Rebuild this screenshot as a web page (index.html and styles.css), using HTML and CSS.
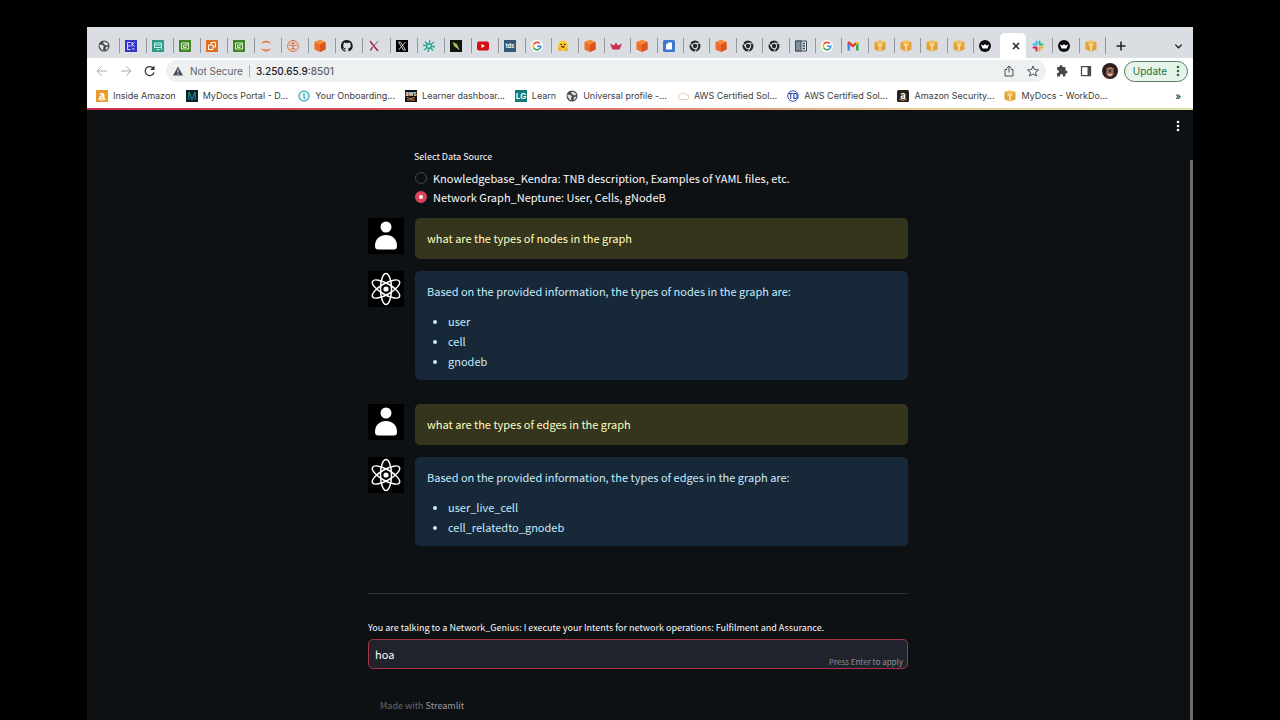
FILE: index.html
```
<!DOCTYPE html>
<html lang="en">
<head>
    <meta charset="UTF-8">
    <meta name="viewport" content="width=device-width, initial-scale=1.0">
    <title>Network Genius</title>
    <link rel="stylesheet" href="styles.css">
</head>
<body>
    <!-- icons used more than once -->
    <svg class="sprite" aria-hidden="true">
        <symbol id="globe" viewBox="0 0 24 24"><circle cx="12" cy="12" r="11" fill="#474b50"/><path d="M3 9l6 1 3 3-2 3 1 5-4-2-4-6zM12 3l7 3 1 4-4 1-3-2-3-3zM16 14l5-1-3 6-3 1z" fill="#dee1e6"/></symbol>
        <symbol id="cube" viewBox="0 0 24 24"><path d="M12 0l11 4v15l-11 5-11-5V4z" fill="#ee6c2b"/><path d="M12 0l11 4-11 5L1 4z" fill="#f58a3c"/><path d="M12 9l11-5v15l-11 5z" fill="#d9531d"/></symbol>
        <symbol id="goldbox" viewBox="0 0 24 24"><path d="M12 1l11 3v15l-11 4-11-4V4z" fill="#e3a238"/><path d="M12 1l11 3-11 4L1 4z" fill="#f2c05a"/><path d="M7 7l5 1 5-1v4l-3 1v9l-2 1-2-1v-9l-3-1z" fill="#f8da97"/></symbol>
        <symbol id="green" viewBox="0 0 24 24"><path d="M0 0h24v24H0z" fill="#3f8624"/><path d="M5 6h14v12H5z" fill="none" stroke="#d9efce" stroke-width="2"/><path d="M9 10h5v5H9zM14 10l4-3" fill="none" stroke="#d9efce" stroke-width="2"/></symbol>
        <symbol id="google" viewBox="0 0 24 24"><circle cx="12" cy="12" r="12" fill="#fff"/><g fill="none" stroke-width="3.400"><path d="M17.300 6.700A7.500 7.500 0 0 0 5.500 8.300" stroke="#ea4335"/><path d="M5.500 8.300a7.500 7.500 0 0 0 0 7.400" stroke="#fbbc05"/><path d="M5.500 15.700a7.500 7.500 0 0 0 11.500 2" stroke="#34a853"/><path d="M17 17.700a7.500 7.500 0 0 0 2.500-5.200H12" stroke="#4285f4"/></g></symbol>
        <symbol id="chrome" viewBox="0 0 24 24"><circle cx="12" cy="12" r="11" fill="#24272b"/><circle cx="12" cy="12" r="5.500" fill="none" stroke="#dee1e6" stroke-width="2"/><path d="M12 6.500h10M7.300 14.700L2.500 6M16.700 14.700L12 23" stroke="#dee1e6" stroke-width="2"/></symbol>
        <symbol id="crown" viewBox="0 0 24 24"><circle cx="12" cy="12" r="12" fill="#0b0c0e"/><path d="M4 9l5 2 3-3 3 3 5-2-3 8H7z" fill="#fff"/></symbol>
        <symbol id="dots" viewBox="0 0 24 24"><circle cx="12" cy="4" r="2.600"/><circle cx="12" cy="12" r="2.600"/><circle cx="12" cy="20" r="2.600"/></symbol>
        <symbol id="person" viewBox="0 0 36 36"><path d="M0 0h36v36H0z"/><circle cx="18" cy="9" r="5.500" fill="#fff"/><path d="M7 28c0-7 4.500-11 11-11s11 4 11 11c0 2.500-1 3.500-3 3.500H10c-2 0-3-1-3-3.500z" fill="#fff"/></symbol>
        <symbol id="atom" viewBox="0 0 36 36"><path d="M0 0h36v36H0z"/><g fill="none" stroke="#fff" stroke-width="1.500"><ellipse cx="18" cy="18" rx="5.500" ry="15.500"/><ellipse cx="18" cy="18" rx="5.500" ry="15.500" transform="rotate(60 18 18)"/><ellipse cx="18" cy="18" rx="5.500" ry="15.500" transform="rotate(120 18 18)"/></g><circle cx="18" cy="18" r="2.600" fill="#fff"/></symbol>
    </svg>

    <div class="browser">
        <header class="chrome">
            <div class="tab-strip">
                <div class="tabs">
                    <button class="tab wide first" aria-label="Site"><svg><use href="#globe"/></svg></button>
                    <button class="tab wide" aria-label="EKS"><svg viewBox="0 0 24 24"><path d="M0 0h24v24H0z" fill="#3436c7"/><path d="M5 5v14M5 5h6M5 12h6M5 19h6M14 4v9M14 9l5-4M14 8l5 5M14 18h5" stroke="#d5d8ff" stroke-width="2"/></svg></button>
                    <button class="tab wide" aria-label="Service"><svg viewBox="0 0 24 24"><path d="M0 0h24v24H0z" fill="#2b9a87"/><path d="M5 6h14v9H5zM5 10h14M9 19h6M17 14l3 5" fill="none" stroke="#c9f2ea" stroke-width="2"/></svg></button>
                    <button class="tab wide" aria-label="Storage"><svg><use href="#green"/></svg></button>
                    <button class="tab wide" aria-label="EC2"><svg viewBox="0 0 24 24"><path d="M0 0h24v24H0z" fill="#e2711d"/><path d="M5 10h9v9H5zM10 10V5h9v9h-5" fill="none" stroke="#fff" stroke-width="2"/></svg></button>
                    <button class="tab wide" aria-label="Storage"><svg><use href="#green"/></svg></button>
                    <button class="tab wide" aria-label="Jupyter"><svg viewBox="0 0 24 24"><path d="M2 8c3-9 17-9 20 0-5-4-15-4-20 0zM2 16c3 9 17 9 20 0-5 4-15 4-20 0z" fill="#e8743b"/></svg></button>
                    <button class="tab wide" aria-label="Model"><svg viewBox="0 0 24 24" fill="none" stroke="#df7546" stroke-width="2"><path d="M9 1h6l6 4 2 7-2 7-6 4H9l-6-4-2-7 2-7z"/><path d="M12 1v22M12 8L7 5M12 12L4 10M12 16l-6 3M12 8l5-3M12 12l8-2M12 16l6 3"/></svg></button>
                    <button class="tab wide" aria-label="AWS"><svg><use href="#cube"/></svg></button>
                    <button class="tab wide" aria-label="GitHub"><svg viewBox="0 0 16 16"><path d="M8 0a8 8 0 0 0-2.500 15.600c.4.100.5-.2.500-.4v-1.500c-2.200.5-2.700-1-2.700-1-.4-.9-.9-1.200-.9-1.200-.7-.5.100-.5.100-.5.800.100 1.200.8 1.200.8.700 1.200 1.900.9 2.300.7.100-.5.300-.9.500-1.100-1.800-.2-3.600-.9-3.600-4 0-.9.300-1.600.8-2.100-.1-.2-.4-1 .1-2.100 0 0 .7-.2 2.200.8a7.600 7.600 0 0 1 4 0c1.500-1 2.200-.8 2.200-.8.400 1.100.2 1.900.1 2.100.5.600.8 1.300.8 2.100 0 3.100-1.900 3.700-3.700 3.900.3.300.6.800.6 1.500v2.200c0 .2.100.5.600.4A8 8 0 0 0 8 0z" fill="#15181c"/></svg></button>
                    <button class="tab wide" aria-label="arXiv"><svg viewBox="0 0 24 24"><path d="M4 2l6 8 10 12M9 14l-4 7" stroke="#a8253f" stroke-width="3"/><path d="M20 2l-9 11" stroke="#6e6467" stroke-width="2"/></svg></button>
                    <button class="tab wide" aria-label="X"><svg viewBox="0 0 24 24"><path d="M0 0h24v24H0z"/><path d="M5 4h4l10 16h-4zM19 4L5 20" fill="none" stroke="#fff" stroke-width="1.500"/></svg></button>
                    <button class="tab wide" aria-label="Sun"><svg viewBox="0 0 24 24" fill="none" stroke="#2aa894" stroke-width="2.600"><circle cx="12" cy="12" r="4.500"/><path d="M12 8l2-8M16 9l6-5M16 12l8 2M15 15l5 6M12 16l-2 8M8 15l-6 5M8 12l-8-2M9 9L4 3"/></svg></button>
                    <button class="tab wide" aria-label="Bird"><svg viewBox="0 0 24 24"><path d="M0 0h24v24H0z" fill="#101510"/><path d="M5 4l9 4 5 12-10-7z" fill="#a3ae4b"/><path d="M6 5l12 14" stroke="#eef0bb"/></svg></button>
                    <button class="tab wide" aria-label="YouTube"><svg viewBox="0 0 24 24"><rect y="3" width="24" height="18" rx="4" fill="#d50f16"/><path d="M9 8l7 4-7 4z" fill="#fff"/></svg></button>
                    <button class="tab wide" aria-label="TDS"><svg viewBox="0 0 24 24"><path d="M0 0h24v24H0z" fill="#355876"/><text x="12" y="16" font-size="11" font-weight="700" text-anchor="middle" fill="#fff">tds</text></svg></button>
                    <button class="tab" aria-label="Google"><svg><use href="#google"/></svg></button>
                    <button class="tab" aria-label="Hugging Face"><svg viewBox="0 0 24 24"><circle cx="12" cy="11" r="10" fill="#fbc934"/><path d="M1 15l6 1 4 6H3zM23 15l-6 1-4 6h8z" fill="#f0b42e"/><circle cx="8.500" cy="9" r="1.500"/><circle cx="15.500" cy="9" r="1.500"/><path d="M8 12h8c-1 5-7 5-8 0z" fill="#7b3d16"/></svg></button>
                    <button class="tab" aria-label="AWS"><svg><use href="#cube"/></svg></button>
                    <button class="tab" aria-label="Streamlit"><svg viewBox="0 0 24 24"><path d="M0 7l8 4 4-6 4 6 8-4-4 10c-1 2-2 2-3 2H7c-1 0-2 0-3-2z" fill="#cb2d4c"/></svg></button>
                    <button class="tab" aria-label="AWS"><svg><use href="#cube"/></svg></button>
                    <button class="tab" aria-label="Document"><svg viewBox="0 0 24 24"><rect width="24" height="24" rx="3" fill="#3c78d0"/><path d="M10 5h8v14H6V9z" fill="#fff"/><path d="M6 9h4V5z" fill="#8db6ee"/></svg></button>
                    <button class="tab" aria-label="Chrome"><svg><use href="#chrome"/></svg></button>
                    <button class="tab" aria-label="AWS"><svg><use href="#cube"/></svg></button>
                    <button class="tab" aria-label="Chrome"><svg><use href="#chrome"/></svg></button>
                    <button class="tab" aria-label="Chrome"><svg><use href="#chrome"/></svg></button>
                    <button class="tab" aria-label="Reader"><svg viewBox="0 0 24 24"><path d="M1 2h22v20H1z" fill="#e9edef" stroke="#394b59" stroke-width="2"/><path d="M1 2h11v20H1z" fill="#81919b" stroke="#394b59" stroke-width="2"/><path d="M15 7h5M15 12h5M15 17h5" stroke="#394b59" stroke-width="3"/></svg></button>
                    <button class="tab" aria-label="Google"><svg><use href="#google"/></svg></button>
                    <button class="tab" aria-label="Gmail"><svg viewBox="0 0 24 24"><path d="M1 6l5 4v11H1z" fill="#4285f4"/><path d="M18 10l5-4v15h-5z" fill="#34a853"/><path d="M1 6c0-3 3-4 5-2l6 5 6-5v6l-6 5-11-8z" fill="#e33b2e"/><path d="M18 4c2-2 5-1 5 2l-5 4z" fill="#fbbc05"/></svg></button>
                    <button class="tab" aria-label="MyDocs"><svg><use href="#goldbox"/></svg></button>
                    <button class="tab" aria-label="MyDocs"><svg><use href="#goldbox"/></svg></button>
                    <button class="tab" aria-label="MyDocs"><svg><use href="#goldbox"/></svg></button>
                    <button class="tab" aria-label="MyDocs"><svg><use href="#goldbox"/></svg></button>
                    <button class="tab" aria-label="Streamlit"><svg><use href="#crown"/></svg></button>
                    <button class="tab active" aria-label="Close tab"><svg viewBox="0 0 24 24"><path d="M6 6l12 12M18 6L6 18" stroke="#202124" stroke-width="3"/></svg></button>
                    <button class="tab first" aria-label="Slack"><svg viewBox="0 0 24 24" fill="none" stroke-width="4" stroke-linecap="round"><path d="M9 3v6M3 9h4" stroke="#36bdea"/><path d="M15 9h6M15 3v3" stroke="#2eb67d"/><path d="M15 15v6M18 15h3" stroke="#ecb22e"/><path d="M3 15h6M9 18v3" stroke="#d51e59"/></svg></button>
                    <button class="tab" aria-label="Streamlit"><svg><use href="#crown"/></svg></button>
                    <button class="tab" aria-label="MyDocs"><svg><use href="#goldbox"/></svg></button>
                </div>
                <button class="new-tab" aria-label="New tab"><svg viewBox="0 0 24 24"><path d="M12 3v18M3 12h18" stroke="#202124" stroke-width="3"/></svg></button>
                <button class="tab-menu" aria-label="Search tabs"><svg viewBox="0 0 24 24" fill="none"><path d="M5 9l7 7 7-7" stroke="#202124" stroke-width="3"/></svg></button>
            </div>

            <div class="toolbar">
                <div class="nav">
                    <button aria-label="Back"><svg viewBox="0 0 24 24" fill="none" stroke="#a5a8ac" stroke-width="2"><path d="M22 12H3M11 3l-9 9 9 9"/></svg></button>
                    <button aria-label="Forward"><svg viewBox="0 0 24 24" fill="none" stroke="#a5a8ac" stroke-width="2"><path d="M2 12h19M13 3l9 9-9 9"/></svg></button>
                    <button aria-label="Reload"><svg viewBox="0 0 24 24" fill="none" stroke="#303236" stroke-width="2.500"><path d="M20 15a9 9 0 1 1-2-9"/><path d="M21 1v9h-9z" fill="#303236" stroke="none"/></svg></button>
                </div>
                <div class="address">
                    <svg viewBox="0 0 24 24"><path d="M12 3l10 18H2z" fill="#4b4e52"/><path d="M12 9v6M12 17v3" stroke="#eef1f2" stroke-width="2"/></svg>
                    <span class="warning">Not Secure</span>
                    <span class="url">3.250.65.9<span class="port">:8501</span></span>
                    <button aria-label="Share"><svg viewBox="0 0 24 24" fill="none" stroke="#4b4e52" stroke-width="2"><path d="M8 9H4v13h16V9h-4M12 15V2M7 7l5-5 5 5"/></svg></button>
                    <button aria-label="Bookmark this tab"><svg viewBox="0 0 24 24" fill="none" stroke="#4b4e52" stroke-width="2"><path d="M12 2l3 7 8 1-6 5 2 7-7-4-7 4 2-7-6-5 8-1z"/></svg></button>
                </div>
                <div class="tools">
                    <button aria-label="Extensions"><svg viewBox="0 0 24 24" fill="#45484c"><path d="M20 11h-1V6c0-1-1-2-2-2h-4V3a3 3 0 0 0-6 0v1H4C3 4 2 5 2 6v4h1a3 3 0 0 1 0 6H2v5c0 1 1 2 2 2h4v-2a3 3 0 0 1 6 0v2h3c1 0 2-1 2-2v-4h1a3 3 0 0 0 0-6z"/></svg></button>
                    <button aria-label="Side panel"><svg viewBox="0 0 24 24"><path d="M3 3h18v18H3z" fill="none" stroke="#45484c" stroke-width="2.500"/><path d="M15 3h6v18h-6z" fill="#45484c"/></svg></button>
                    <button class="profile" aria-label="Profile"><svg viewBox="0 0 32 32"><circle cx="16" cy="16" r="16" fill="#2c211e"/><path d="M8 12c2-5 14-5 16 0v7c-1 11-15 11-16 0z" fill="#b97560"/><path d="M8 14h7v4H8zM17 14h7v4h-7z" fill="#dba897" stroke="#181314" stroke-width="1.500"/><path d="M12 23q4 3 8 0" stroke="#f3dfd7" stroke-width="2" fill="none"/><path d="M4 26q5 0 9 5-6 0-9-5z" fill="#97303a"/></svg></button>
                    <button class="update">Update <svg><use href="#dots"/></svg></button>
                </div>
            </div>

            <nav class="bookmarks">
                <a href="#"><svg viewBox="0 0 24 24"><path d="M0 0h24v24H0z" fill="#eb9a2d"/><text x="12" y="17" font-size="21" font-weight="700" text-anchor="middle" fill="#fff">a</text><path d="M4 18q8 5 16 0" stroke="#fff" stroke-width="2" fill="none"/></svg>Inside Amazon</a>
                <a href="#"><svg viewBox="0 0 24 24"><path d="M0 0h24v24H0z" fill="#0d1e23"/><text x="12" y="19" font-size="20" text-anchor="middle" fill="#239a8e">M</text></svg>MyDocs Portal - D...</a>
                <a href="#"><svg viewBox="0 0 24 24"><circle cx="12" cy="12" r="10" fill="#e9f8fa" stroke="#55b8ca" stroke-width="3"/><path d="M12 6v8q0 3 3 3" fill="none" stroke="#55b8ca" stroke-width="3"/></svg>Your Onboarding...</a>
                <a href="#"><svg viewBox="0 0 24 24"><path d="M0 0h24v24H0z" fill="#111"/><text x="12" y="12" font-size="11" font-weight="700" text-anchor="middle" fill="#fff">aws</text><path d="M4 15q8 5 16 0M4 20h16" stroke="#d98257" stroke-width="2" fill="none"/></svg>Learner dashboar...</a>
                <a href="#"><svg viewBox="0 0 24 24"><path d="M0 0h24v24H0z" fill="#157a78"/><text x="12" y="18" font-size="16" font-weight="700" text-anchor="middle" fill="#fff">LG</text></svg>Learn</a>
                <a href="#"><svg><use href="#globe"/></svg>Universal profile -...</a>
                <a href="#"><svg viewBox="0 0 24 24"><path d="M6 19a5 5 0 0 1 0-9 7 7 0 0 1 12-1 5 5 0 0 1 1 10z" fill="none" stroke="#e5b58c" stroke-width="1.500"/></svg>AWS Certified Sol...</a>
                <a href="#"><svg viewBox="0 0 24 24"><circle cx="12" cy="12" r="10.500" fill="#fff" stroke="#3450b8" stroke-width="2"/><text x="12" y="17" font-size="14" font-weight="700" text-anchor="middle" fill="#2238a2">TD</text></svg>AWS Certified Sol...</a>
                <a href="#"><svg viewBox="0 0 24 24"><rect width="24" height="24" rx="3" fill="#29201b"/><text x="12" y="17" font-size="19" font-weight="700" text-anchor="middle" fill="#fff">a</text><path d="M5 19q7 3 14 0" stroke="#d79b50" stroke-width="2" fill="none"/></svg>Amazon Security...</a>
                <a href="#"><svg><use href="#goldbox"/></svg>MyDocs - WorkDo...</a>
                <button class="more" aria-label="More bookmarks">»</button>
            </nav>
        </header>

        <main class="app">
            <button class="app-menu" aria-label="Menu"><svg><use href="#dots"/></svg></button>
            <div class="scrollbar"></div>
            <div class="content">
                <fieldset class="source">
                    <legend>Select Data Source</legend>
                    <label><input type="radio" name="source">Knowledgebase_Kendra: TNB description, Examples of YAML files, etc.</label>
                    <label><input type="radio" name="source" checked>Network Graph_Neptune: User, Cells, gNodeB</label>
                </fieldset>

                <div class="exchange">
                    <svg class="avatar"><use href="#person"/></svg>
                    <div class="message user"><p>what are the types of nodes in the graph</p></div>
                    <svg class="avatar"><use href="#atom"/></svg>
                    <div class="message bot">
                        <p>Based on the provided information, the types of nodes in the graph are:</p>
                        <ul>
                            <li>user</li>
                            <li>cell</li>
                            <li>gnodeb</li>
                        </ul>
                    </div>
                </div>

                <div class="exchange">
                    <svg class="avatar"><use href="#person"/></svg>
                    <div class="message user"><p>what are the types of edges in the graph</p></div>
                    <svg class="avatar"><use href="#atom"/></svg>
                    <div class="message bot">
                        <p>Based on the provided information, the types of edges in the graph are:</p>
                        <ul>
                            <li>user_live_cell</li>
                            <li>cell_relatedto_gnodeb</li>
                        </ul>
                    </div>
                </div>

                <hr>

                <form class="prompt">
                    <label for="intent">You are talking to a Network_Genius: I execute your Intents for network operations: Fulfilment and Assurance.</label>
                    <div class="field">
                        <input id="intent" type="text" value="hoa">
                        <span class="hint">Press Enter to apply</span>
                    </div>
                </form>

                <footer>Made with <a href="#">Streamlit</a></footer>
            </div>
        </main>
    </div>
</body>
</html>
```
FILE: styles.css
```
* {
    box-sizing: border-box;
    margin: 0;
    padding: 0;
}

body {
    height: 100vh;
    padding: 27px 87px 0;
    overflow: hidden;
    background-color: #000;
    font-family: Inter, Arial, sans-serif;
}

button {
    border: none;
    background: none;
    font-family: inherit;
    cursor: pointer;
}

a {
    color: inherit;
    text-decoration: none;
}

svg {
    display: block;
    flex: none;
    width: 12px;
    height: 12px;
}

.sprite {
    position: absolute;
    width: 0;
    height: 0;
}

.browser {
    height: 100%;
    display: flex;
    flex-direction: column;
}

/* Browser window */
.chrome {
    background-color: #fff;
    color: #3c4043;
}

.tab-strip {
    display: flex;
    align-items: flex-end;
    height: 31px;
    padding: 0 9px 0 5px;
    background-color: #dadde1;
}

.tabs {
    flex: 1;
    display: flex;
}

.tab {
    flex: 264 1 0;
    min-width: 0;
    height: 25px;
    display: flex;
    align-items: center;
    padding-left: 4px;
    border-radius: 5px 5px 0 0;
}

.tab.wide {
    flex-grow: 272;
}

.tab::before {
    content: '';
    width: 1px;
    height: 15px;
    margin-right: 5px;
    margin-left: -4px;
    background-color: #93979c;
}

.tab.first::before,
.tab.active::before {
    background: none;
}

.tab.active {
    justify-content: center;
    background-color: #fff;
}

.new-tab {
    height: 25px;
    padding-left: 9px;
    border-left: 1px solid #93979c;
    border-image: linear-gradient(transparent 5px, #93979c 5px 20px, transparent 20px) 1;
}

.tab-menu {
    height: 25px;
    margin-left: 46px;
}

.tab-menu svg {
    width: 11px;
}

.toolbar {
    display: flex;
    align-items: center;
    height: 27px;
    padding: 0 5px 1px 9px;
}

.nav {
    display: flex;
    gap: 12px;
    margin-right: 10px;
}

.address {
    flex: 1;
    display: flex;
    align-items: center;
    height: 22px;
    padding: 0 7px 0 6px;
    border-radius: 11px;
    background-color: #eef1f2;
    font-size: 10px;
}

.address button + button {
    margin-left: 12px;
}

.warning {
    margin-left: 6px;
    padding-right: 6px;
    border-right: 1px solid #a9adb1;
    color: #5f6368;
}

.url {
    flex: 1;
    margin-left: 6px;
    color: #202124;
    font-weight: 500;
}

.port {
    color: #5f6368;
}

.tools {
    display: flex;
    align-items: center;
    gap: 12px;
    padding-left: 10px;
}

.profile {
    margin-left: -2px;
}

.profile svg {
    width: 16px;
    height: 16px;
}

.update {
    display: flex;
    align-items: center;
    gap: 5px;
    height: 21px;
    margin-left: -6px;
    padding: 0 3px 0 8px;
    border: 1px solid #557b62;
    border-radius: 11px;
    background-color: #e6f4ea;
    color: #24733d;
    font-size: 10px;
}

.update svg {
    fill: #24733d;
}

.bookmarks {
    display: flex;
    align-items: center;
    gap: 10px;
    height: 25px;
    padding: 0 12px 2px 9px;
    border-bottom: 2px solid;
    border-image: linear-gradient(to right, #cf2d4b, #dd7168 45%, #e9cf91 75%, #dce6a5) 1;
    font-size: 9px;
    white-space: nowrap;
}

.bookmarks a {
    display: flex;
    align-items: center;
    gap: 5px;
}

.more {
    margin-left: auto;
    font-size: 10px;
}

/* Streamlit app */
.app {
    position: relative;
    flex: 1;
    padding: 38px 20px 0 16px;
    background-color: #0e1114;
    color: #fafafa;
    font-family: "Noto Sans CJK SC", "Open Sans", sans-serif;
    font-size: 11px;
    line-height: 20px;
}

.app-menu {
    position: absolute;
    top: 10px;
    right: 9px;
}

.app-menu svg {
    fill: #fafafa;
}

.scrollbar {
    position: absolute;
    top: 50px;
    right: 0;
    bottom: 0;
    width: 3px;
    background-color: #6b6c6e;
}

.content {
    max-width: 540px;
    margin: 0 auto;
}

.source {
    margin: 0 0 12px 46px;
    border: none;
}

.source legend {
    margin-bottom: 2px;
    font-size: 9px;
    line-height: 18px;
}

.source label {
    display: flex;
    align-items: center;
    gap: 6px;
    height: 19px;
}

.source input {
    appearance: none;
    width: 12px;
    height: 12px;
    margin-left: 1px;
    border: 1px solid #43464b;
    border-radius: 50%;
}

.source input:checked {
    border: 4px solid #d8435a;
    background-color: #fff;
}

.exchange {
    display: grid;
    grid-template-columns: 36px 1fr;
    align-items: start;
    gap: 12px 11px;
    margin-bottom: 24px;
}

.avatar {
    width: 36px;
    height: 36px;
}

.message {
    padding: 10px 12px;
    border-radius: 5px;
}

.message.user {
    padding-bottom: 11px;
    background-color: #35341c;
    color: #ffffc2;
}

.message.bot {
    padding-bottom: 9px;
    background-color: #172838;
    color: #c7ebff;
}

.message ul {
    margin-top: 10px;
    padding-left: 21px;
}

.content hr {
    margin-top: 47px;
    border: none;
    border-top: 1px solid #2b2e33;
}

.prompt {
    margin-top: 24px;
}

.prompt label {
    display: block;
    margin-bottom: 1px;
    font-size: 9px;
}

.field {
    position: relative;
}

.field input {
    display: block;
    width: 100%;
    height: 30px;
    padding: 0 6px;
    border: 1px solid #a83347;
    border-radius: 5px;
    outline: none;
    background-color: #20232b;
    color: #fafafa;
    font-family: inherit;
    font-size: 11px;
}

.hint {
    position: absolute;
    right: 5px;
    bottom: 1px;
    color: #8e9094;
    font-size: 8px;
    line-height: 12px;
}

footer {
    margin-top: 27px;
    padding-left: 12px;
    color: #65686c;
    font-size: 9px;
}

footer a {
    color: #9a9c9f;
}
```
